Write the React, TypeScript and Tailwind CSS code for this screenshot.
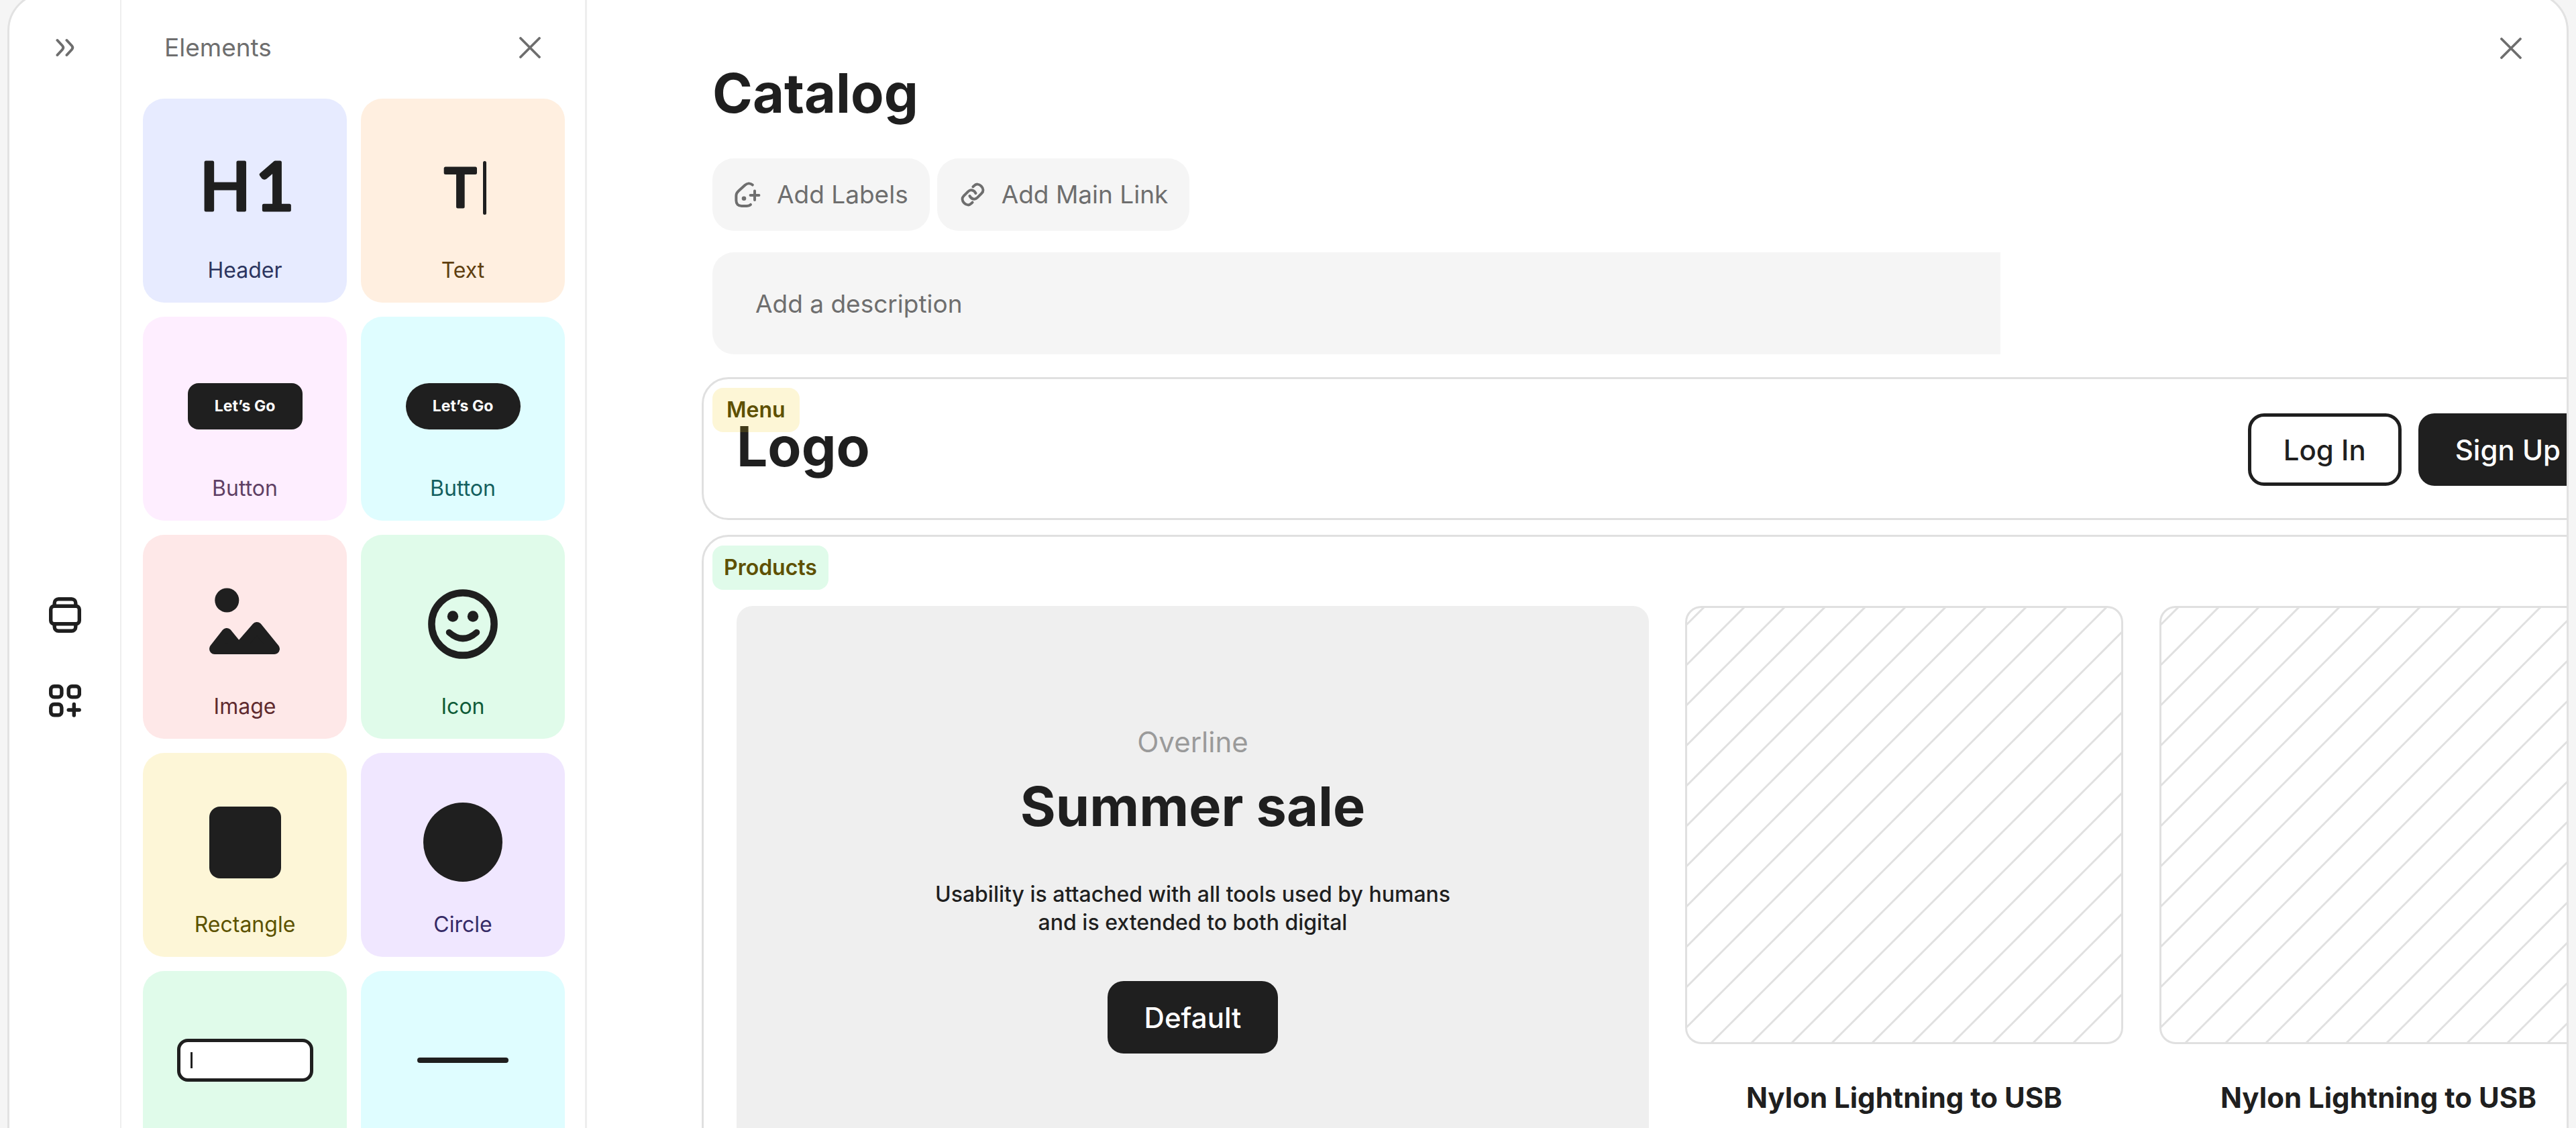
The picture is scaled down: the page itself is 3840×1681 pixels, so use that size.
import type { ReactNode } from 'react'
import clsx from 'clsx'

const CloseIcon = () => (
  <svg width="32" height="32" viewBox="0 0 32 32" fill="none" stroke="currentColor" strokeWidth="3.8" strokeLinecap="round">
    <path d="M2 2l28 28M30 2L2 30" />
  </svg>
)

const ExpandIcon = () => (
  <svg width="28" height="28" viewBox="0 0 28 28" fill="none" stroke="currentColor" strokeWidth="4" strokeLinecap="round" strokeLinejoin="round">
    <path d="M2.5 3l7.4 8c1.8 2 1.8 4 0 6l-7.4 8M16.5 3l7.4 8c1.8 2 1.8 4 0 6l-7.4 8" />
  </svg>
)

const SectionsIcon = () => (
  <svg width="48" height="53" viewBox="0 0 48 53" fill="none" stroke="currentColor" strokeWidth="5.4">
    <rect x="8.2" y="2.7" width="31.6" height="47.6" rx="6" />
    <rect x="2.7" y="13.2" width="42.6" height="26.6" rx="5" fill="#fff" />
  </svg>
)

const WidgetsIcon = () => (
  <svg width="48" height="49" viewBox="0 0 48 49" fill="none" stroke="currentColor" strokeWidth="5.4" strokeLinecap="round">
    <rect x="2.7" y="2.7" width="16.2" height="16.2" rx="5" />
    <rect x="29.2" y="2.7" width="16.2" height="16.2" rx="5" />
    <rect x="2.7" y="29.5" width="16.2" height="16.2" rx="5" />
    <path d="M37.3 29.5v16.5M29.2 38h16" />
  </svg>
)

const LabelIcon = () => (
  <svg width="40" height="40" viewBox="0 0 40 40" fill="none" stroke="currentColor" strokeWidth="4" strokeLinecap="round">
    <path d="M27.8 5.6c-3.6-3.2-8-2.8-11.4.4l-9.6 8.8C4.4 17 3.4 18.6 3.4 21.6v7.2c0 5.2 3 8.2 8.2 8.2h6.8c3 0 5-.6 6.6-2.2" />
    <path d="M31 14.5v13.4M24.6 21.1h12.8" />
    <circle cx="15" cy="25.7" r="3.3" fill="currentColor" stroke="none" />
  </svg>
)

const LinkIcon = () => (
  <svg width="40" height="40" viewBox="-3 -2 40 40" fill="none" stroke="currentColor" strokeWidth="4" strokeLinecap="round">
    <path d="M18.4 6.4l1.6-1.6c3-3 7.2-3 10.7.6s3.6 7.7.6 10.7l-6.5 6.5c-3.4 3.2-8.6 2.8-11.3-2.6" />
    <path transform="rotate(180 18 18)" d="M18.4 6.4l1.6-1.6c3-3 7.2-3 10.7.6s3.6 7.7.6 10.7l-6.5 6.5c-3.4 3.2-8.6 2.8-11.3-2.6" />
  </svg>
)

const HeaderArt = () => (
  <svg width="160" height="170" viewBox="-80 -85 160 170" fill="currentColor" stroke="currentColor" strokeWidth="5" strokeLinejoin="round" className="font-['Lato']">
    <text x="-67" y="33" fontSize="99">H</text>
    <text x="16" y="33" fontSize="99">1</text>
  </svg>
)

const TextArt = () => (
  <svg width="90" height="150" viewBox="-45 -75 90 150" fill="currentColor" stroke="currentColor" strokeWidth="5" strokeLinejoin="round" strokeLinecap="round" className="font-['Lato']">
    <text x="-27" y="28" fontSize="79">T</text>
    <path d="M32.5-37.5v75" />
  </svg>
)

const ImageArt = () => (
  <svg width="110" height="110" viewBox="-55 -55 110 110" fill="currentColor">
    <circle cx="-26.7" cy="-35.5" r="18" />
    <path d="M-45 37L-27 14L-9 36L18 5L44 37Z" stroke="currentColor" strokeWidth="16" strokeLinejoin="round" />
  </svg>
)

const SmileArt = () => (
  <svg width="104" height="104" viewBox="-52 -52 104 104" fill="currentColor">
    <circle r="46.6" fill="none" stroke="currentColor" strokeWidth="10.5" />
    <circle cx="-15" cy="-11.5" r="8.2" />
    <circle cx="15" cy="-11.5" r="8.2" />
    <path d="M-20.5 12.5Q0 30.5 20.5 12.5" fill="none" stroke="currentColor" strokeWidth="9.5" strokeLinecap="round" />
  </svg>
)

const ButtonArt = ({ pill = false }: { pill?: boolean }) => (
  <span
    className={clsx(
      'flex h-[69px] w-[171px] items-center justify-center bg-[#1f1f1f] text-[23px] font-bold text-white',
      pill ? 'rounded-full' : 'rounded-2xl',
    )}
  >
    Let’s Go
  </span>
)

const InputArt = () => (
  <span className="flex h-16 w-[203px] items-center rounded-2xl border-5 border-[#1f1f1f] bg-white pl-[15px]">
    <span className="h-6 w-[3px] bg-[#1f1f1f]" />
  </span>
)

type Element = { label: string; tone: string; art: ReactNode }

const elements: Element[] = [
  { label: 'Header', tone: 'bg-[#e7ebff] text-[#2c3560]', art: <HeaderArt /> },
  { label: 'Text', tone: 'bg-[#ffefe0] text-[#5f3f10]', art: <TextArt /> },
  { label: 'Button', tone: 'bg-[#feeeff] text-[#5f4065]', art: <ButtonArt /> },
  { label: 'Button', tone: 'bg-[#dffdff] text-[#14605f]', art: <ButtonArt pill /> },
  { label: 'Image', tone: 'bg-[#fee8e8] text-[#5f2a2e]', art: <ImageArt /> },
  { label: 'Icon', tone: 'bg-[#e0fbea] text-[#0f5c38]', art: <SmileArt /> },
  { label: 'Rectangle', tone: 'bg-[#fdf6d7] text-[#5c5200]', art: <span className="size-[107px] rounded-2xl bg-[#1f1f1f]" /> },
  { label: 'Circle', tone: 'bg-[#f0e7ff] text-[#352a66]', art: <span className="size-[118px] rounded-full bg-[#1f1f1f]" /> },
  { label: 'Input', tone: 'bg-[#e0fbea] text-[#0f5c38]', art: <InputArt /> },
  { label: 'Line', tone: 'bg-[#dffdff] text-[#14605f]', art: <span className="h-2 w-[136px] rounded-full bg-[#1f1f1f]" /> },
]

const ElementCard = ({ label, tone, art }: Element) => (
  <button className={clsx('flex h-[304px] flex-col items-center rounded-4xl pt-12 text-[32px] leading-10', tone)}>
    <span className="flex h-[170px] items-center justify-center text-[#1f1f1f]">{art}</span>
    <span className="mt-[18px]">{label}</span>
  </button>
)

const Badge = ({ className, children }: { className: string; children: ReactNode }) => (
  <span className={clsx('absolute top-[13px] left-[13px] flex h-[66px] items-center rounded-2xl text-[32px] font-semibold text-[#5e5000]', className)}>
    {children}
  </span>
)

const ProductCard = ({ id, title }: { id: string; title: string }) => (
  <article className="flex flex-col">
    <div className="aspect-square overflow-hidden rounded-3xl border-3 border-[#e0e0e0]">
      <svg className="size-full" fill="none" stroke="#e0e0e0" strokeWidth="3">
        <defs>
          <pattern id={id} width="60" height="60" patternUnits="userSpaceOnUse">
            <path d="M-10 34L34-10M14 70L70 14" />
          </pattern>
        </defs>
        <rect width="100%" height="100%" fill={`url(#${id})`} stroke="none" />
      </svg>
    </div>
    <h3 className="mt-12 text-center text-[42px] leading-16 font-bold">{title}</h3>
  </article>
)

export default function App() {
  return (
    <div className="h-screen overflow-hidden bg-[#f5f5f5] px-[11px] font-['Inter',sans-serif] text-[#1f1f1f]">
      <div className="-mt-3 flex h-[calc(100%+96px)] overflow-hidden rounded-[58px] border-3 border-[#e2e2e2] bg-white">
        <nav className="flex w-[167px] shrink-0 flex-col items-center border-r-2 border-[#eee] pt-[66px]">
          <button aria-label="Expand" className="text-[#6e6e6e]">
            <ExpandIcon />
          </button>
          <div className="mt-[805px] flex flex-col gap-[77px]">
            <button aria-label="Sections">
              <SectionsIcon />
            </button>
            <button aria-label="Elements">
              <WidgetsIcon />
            </button>
          </div>
        </nav>

        <aside className="w-[694px] shrink-0 overflow-hidden border-r-3 border-[#eee] pr-[30px] pl-8">
          <header className="flex h-[156px] items-center justify-between pt-1 pr-9 pl-8 text-[#6e6e6e]">
            <h2 className="text-[37px]">Elements</h2>
            <button aria-label="Close elements">
              <CloseIcon />
            </button>
          </header>
          <div className="grid grid-cols-2 gap-[21px]">
            {elements.map((el, i) => (
              <ElementCard key={i} {...el} />
            ))}
          </div>
        </aside>

        <main className="min-w-0 flex-1 overflow-hidden pt-[65px] pl-[171px]">
          <header className="flex items-start justify-between pr-[67px] pl-4">
            <h1 className="mt-[39px] text-[81px] leading-[88px] font-bold">Catalog</h1>
            <button aria-label="Close page" className="text-[#6e6e6e]">
              <CloseIcon />
            </button>
          </header>

          <div className="mt-[53px] flex gap-[11px] pl-4 text-[37px] text-[#6e6e6e]">
            <button className="flex h-[108px] items-center gap-6 rounded-4xl bg-[#f5f5f5] px-8">
              <LabelIcon />
              Add Labels
            </button>
            <button className="flex h-[108px] items-center gap-6 rounded-4xl bg-[#f5f5f5] px-8">
              <LinkIcon />
              Add Main Link
            </button>
          </div>

          <div className="mt-8 pl-4">
            <input
              aria-label="Description"
              placeholder="Add a description"
              className="h-[152px] w-full max-w-[1920px] rounded-l-4xl bg-[#f5f5f5] px-16 text-[37px] placeholder:text-[#6e6e6e]"
            />
          </div>

          {/* Page sections run past the right edge of the canvas */}
          <section className="relative mt-[34px] -mr-[98px] flex items-start justify-between rounded-[40px] border-3 border-[#e0e0e0] px-[49px] pt-[51px] pb-12">
            <strong className="text-[82px] leading-[100px] font-bold">Logo</strong>
            <Badge className="bg-[#f0c800]/16 px-[21px]">Menu</Badge>
            <div className="flex gap-[25px] text-[42px] font-medium">
              <button className="h-[108px] rounded-3xl border-5 border-[#1f1f1f] px-12">Log In</button>
              <button className="h-[108px] rounded-3xl bg-[#1f1f1f] px-[55px] text-white">Sign Up</button>
            </div>
          </section>

          <section className="relative mt-[22px] -mr-[98px] rounded-[40px] border-3 border-[#e0e0e0] px-[49px] pt-[103px] pb-12">
            <Badge className="bg-[#e0fbea] px-[17px]">Products</Badge>
            <div className="grid grid-cols-4 gap-[54px]">
              <article className="col-span-2 flex flex-col items-center rounded-3xl bg-[#efefef] py-[171px] text-center">
                <p className="text-[42px] leading-16 text-[#9a9a9a]">Overline</p>
                <h2 className="mt-4 text-[81px] leading-24 font-bold">Summer sale</h2>
                <p className="mt-[62px] max-w-[800px] text-[32px] leading-[42px] font-medium">
                  Usability is attached with all tools used by humans and is extended to both digital
                </p>
                <button className="mt-[66px] h-[108px] rounded-3xl bg-[#1f1f1f] px-[55px] text-[42px] font-medium text-white">Default</button>
              </article>
              <ProductCard id="stripes-a" title="Nylon Lightning to USB" />
              <ProductCard id="stripes-b" title="Nylon Lightning to USB" />
            </div>
          </section>
        </main>
      </div>
    </div>
  )
}
